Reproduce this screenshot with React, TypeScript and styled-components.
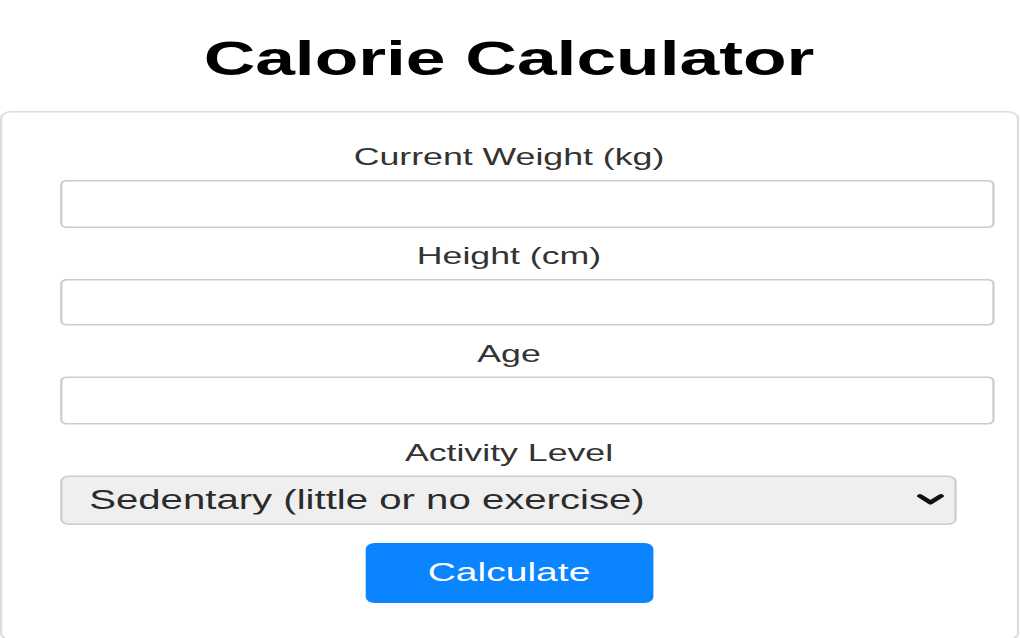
import styled, { createGlobalStyle } from 'styled-components';

// The reference is a small page stretched to fill the frame: 2.23x across, 1.5x down.
const SCALE_X = 2.23;
const SCALE_Y = 1.5;

const GlobalStyle = createGlobalStyle`
  html, body {
    margin: 0;
    padding: 0;
    height: 100%;
    background: #ffffff;
    overflow: hidden;
  }
  body {
    font-family: "Liberation Sans", Arial, sans-serif;
  }
`;

const Stage = styled.div`
  width: 456.5px;
  height: 425.5px;
  padding-top: 21px;
  box-sizing: border-box;
  transform: scale(${SCALE_X}, ${SCALE_Y});
  transform-origin: 0 0;
`;

const Title = styled.h1`
  margin: 0 0 17px;
  font-size: 32px;
  line-height: 36px;
  font-weight: 700;
  text-align: center;
  color: #000000;
`;

const Card = styled.form`
  border: 1px solid #dddddd;
  border-radius: 5px;
  padding: 21px 26px 24px;
  background: #ffffff;
`;

const Label = styled.label`
  display: block;
  font-size: 16px;
  line-height: 18px;
  margin-bottom: 6px;
  text-align: center;
  color: #333333;
`;

const Input = styled.input`
  display: block;
  box-sizing: content-box;
  width: 100%;
  height: 29.5px;
  padding: 0 7px;
  margin: 0 0 10px;
  border: 1px solid #cccccc;
  border-radius: 3px;
  font: inherit;
  font-size: 16px;
  background: #ffffff;
  outline: none;
`;

const SelectWrap = styled.div`
  position: relative;
  width: calc(100% - 1px);
  margin: 0 0 12px;
`;

const Select = styled.select`
  display: block;
  box-sizing: border-box;
  width: 100%;
  height: 33px;
  padding: 0 20px 0 12px;
  margin: 0;
  border: 1px solid #cccccc;
  border-radius: 4px;
  background-color: #efefef;
  color: #2b2b2b;
  font-family: inherit;
  font-size: 18px;
  appearance: none;
  outline: none;
`;

const Chevron = styled.svg`
  position: absolute;
  right: 5px;
  top: 50%;
  width: 12.5px;
  height: 8px;
  margin-top: -4px;
  pointer-events: none;
`;

const Button = styled.button`
  display: block;
  height: 40px;
  margin: 0 auto;
  padding: 0 28px;
  border: none;
  border-radius: 4px;
  background: #0a84ff;
  color: #ffffff;
  font-family: inherit;
  font-size: 17.5px;
  cursor: pointer;
`;

const fields = [
  { id: 'weight', label: 'Current Weight (kg)' },
  { id: 'height', label: 'Height (cm)' },
  { id: 'age', label: 'Age' },
];

const activityLevels = [
  'Sedentary (little or no exercise)',
  'Lightly active (1-3 days/week)',
  'Moderately active (3-5 days/week)',
  'Very active (6-7 days/week)',
  'Extra active (very hard exercise)',
];

function App() {
  return (
    <>
      <GlobalStyle />
      <Stage>
        <Title>Calorie Calculator</Title>
        <Card onSubmit={(e) => e.preventDefault()}>
          {fields.map((f) => (
            <div key={f.id}>
              <Label htmlFor={f.id}>{f.label}</Label>
              <Input id={f.id} type='number' />
            </div>
          ))}
          <Label htmlFor='activity'>Activity Level</Label>
          <SelectWrap>
            <Select id='activity' defaultValue={activityLevels[0]}>
              {activityLevels.map((level) => (
                <option key={level}>{level}</option>
              ))}
            </Select>
            <Chevron viewBox='0 0 12.5 8'>
              <path
                d='M1.5 1.6 L6.25 6 L11 1.6'
                fill='none'
                stroke='#111111'
                strokeWidth='2.5'
                strokeLinecap='round'
                strokeLinejoin='round'
              />
            </Chevron>
          </SelectWrap>
          <Button type='submit'>Calculate</Button>
        </Card>
      </Stage>
    </>
  );
}

export default App;
